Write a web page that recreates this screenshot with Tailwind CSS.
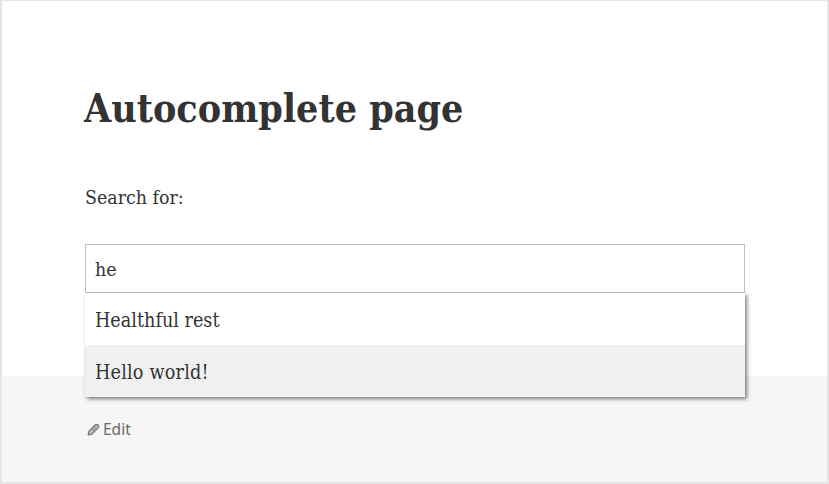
<!DOCTYPE html>
<html lang="en">
<head>
    <meta charset="UTF-8">
    <title>Autocomplete page</title>
    <script src="https://cdn.jsdelivr.net/npm/@tailwindcss/browser@4"></script>
</head>
<body class="bg-white">
    <div class="w-[829px] h-[484px] overflow-hidden border-t border-l-2 border-r-2 border-b-2 border-[#e6e6e6] flex flex-col font-['DejaVu_Serif_Condensed',serif] text-[#333]">
        <!-- Main content -->
        <div class="h-[375px] bg-white pl-[83px] pr-[82px] pt-[83px]">
            <h1 class="-ml-[1px] text-[39px] leading-[48px] font-bold">Autocomplete page</h1>
            <p class="mt-[53px] text-[19.4px] leading-[26px]">Search for:</p>
            <div class="relative mt-[33px]">
                <input type="text" value="he" class="block w-[660px] h-[49px] border border-[#bfbfbf] bg-white pl-[9px] pr-[9px] pt-[2px] text-[19.4px] outline-none">
                <!-- Suggestions -->
                <ul class="absolute z-10 left-0 top-[49px] w-[660px] bg-white shadow-[2px_2px_4px_rgba(0,0,0,0.5)] text-[19.6px]">
                    <li class="h-[52px] px-[10px] leading-[56px]">Healthful rest</li>
                    <li class="h-[52px] px-[10px] leading-[55px] tracking-[0.2px] bg-[#f0f0f0]">Hello world!</li>
                </ul>
            </div>
        </div>
        <!-- Footer -->
        <div class="flex-1 bg-[#f6f6f6] pl-[85px] pt-[43px]">
            <a href="#" class="flex items-center gap-[3px] font-['Noto_Sans',sans-serif] text-[15.5px] leading-[20px] text-[#6f6a65]">
                <svg class="w-[13px] h-[13px] mt-[1px]" viewBox="0 0 13 13" fill="#bbb" stroke="#777" stroke-width="1.2" stroke-linejoin="round">
                    <path d="M1.8 8.4 8.2 2a1.7 1.7 0 0 1 2.9 2.9L4.7 11.3 1.2 11.9Z"/>
                    <path d="M6.6 3.8 9.3 6.5M4.9 5.5 7.6 8.2" fill="none" stroke-width="0.9"/>
                </svg>
                Edit
            </a>
        </div>
    </div>
</body>
</html>
